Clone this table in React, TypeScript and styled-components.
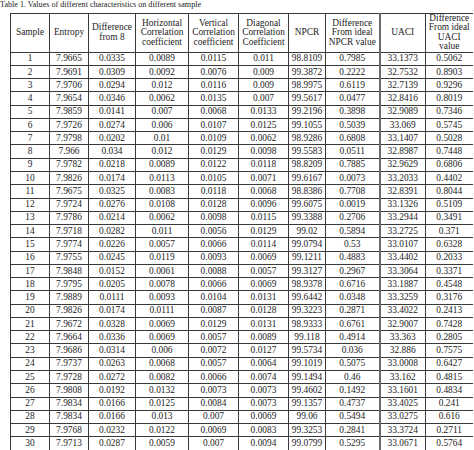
import React from 'react';
import styled, { createGlobalStyle } from 'styled-components';

const GlobalStyle = createGlobalStyle`
  html, body {
    margin: 0;
    padding: 0;
    background: #ffffff;
  }
  body {
    font-family: "Liberation Serif", "Times New Roman", serif;
    color: #1c1c1c;
  }
`;

type Row = [number, string, string, string, string, string, string, string, string, string];

const rows: Row[] = [
  [1, '7.9665', '0.0335', '0.0089', '0.0115', '0.011', '98.8109', '0.7985', '33.1373', '0.5062'],
  [2, '7.9691', '0.0309', '0.0092', '0.0076', '0.009', '99.3872', '0.2222', '32.7532', '0.8903'],
  [3, '7.9706', '0.0294', '0.012', '0.0116', '0.009', '98.9975', '0.6119', '32.7139', '0.9296'],
  [4, '7.9654', '0.0346', '0.0062', '0.0135', '0.007', '99.5617', '0.0477', '32.8416', '0.8019'],
  [5, '7.9859', '0.0141', '0.007', '0.0068', '0.0133', '99.2196', '0.3898', '32.9089', '0.7346'],
  [6, '7.9726', '0.0274', '0.006', '0.0107', '0.0125', '99.1055', '0.5039', '33.069', '0.5745'],
  [7, '7.9798', '0.0202', '0.01', '0.0109', '0.0062', '98.9286', '0.6808', '33.1407', '0.5028'],
  [8, '7.966', '0.034', '0.012', '0.0129', '0.0098', '99.5583', '0.0511', '32.8987', '0.7448'],
  [9, '7.9782', '0.0218', '0.0089', '0.0122', '0.0118', '98.8209', '0.7885', '32.9629', '0.6806'],
  [10, '7.9826', '0.0174', '0.0113', '0.0105', '0.0071', '99.6167', '0.0073', '33.2033', '0.4402'],
  [11, '7.9675', '0.0325', '0.0083', '0.0118', '0.0068', '98.8386', '0.7708', '32.8391', '0.8044'],
  [12, '7.9724', '0.0276', '0.0108', '0.0128', '0.0096', '99.6075', '0.0019', '33.1326', '0.5109'],
  [13, '7.9786', '0.0214', '0.0062', '0.0098', '0.0115', '99.3388', '0.2706', '33.2944', '0.3491'],
  [14, '7.9718', '0.0282', '0.011', '0.0056', '0.0129', '99.02', '0.5894', '33.2725', '0.371'],
  [15, '7.9774', '0.0226', '0.0057', '0.0066', '0.0114', '99.0794', '0.53', '33.0107', '0.6328'],
  [16, '7.9755', '0.0245', '0.0119', '0.0093', '0.0069', '99.1211', '0.4883', '33.4402', '0.2033'],
  [17, '7.9848', '0.0152', '0.0061', '0.0088', '0.0057', '99.3127', '0.2967', '33.3064', '0.3371'],
  [18, '7.9795', '0.0205', '0.0078', '0.0066', '0.0069', '98.9378', '0.6716', '33.1887', '0.4548'],
  [19, '7.9889', '0.0111', '0.0093', '0.0104', '0.0131', '99.6442', '0.0348', '33.3259', '0.3176'],
  [20, '7.9826', '0.0174', '0.0111', '0.0087', '0.0128', '99.3223', '0.2871', '33.4022', '0.2413'],
  [21, '7.9672', '0.0328', '0.0069', '0.0129', '0.0131', '98.9333', '0.6761', '32.9007', '0.7428'],
  [22, '7.9664', '0.0336', '0.0069', '0.0057', '0.0089', '99.118', '0.4914', '33.363', '0.2805'],
  [23, '7.9686', '0.0314', '0.006', '0.0072', '0.0127', '99.5734', '0.036', '32.886', '0.7575'],
  [24, '7.9737', '0.0263', '0.0068', '0.0057', '0.0064', '99.1019', '0.5075', '33.0008', '0.6427'],
  [25, '7.9728', '0.0272', '0.0082', '0.0066', '0.0074', '99.1494', '0.46', '33.162', '0.4815'],
  [26, '7.9808', '0.0192', '0.0132', '0.0073', '0.0073', '99.4602', '0.1492', '33.1601', '0.4834'],
  [27, '7.9834', '0.0166', '0.0125', '0.0084', '0.0073', '99.1357', '0.4737', '33.4025', '0.241'],
  [28, '7.9834', '0.0166', '0.013', '0.007', '0.0069', '99.06', '0.5494', '33.0275', '0.616'],
  [29, '7.9768', '0.0232', '0.0122', '0.0069', '0.0083', '99.3253', '0.2841', '33.3724', '0.2711'],
  [30, '7.9713', '0.0287', '0.0059', '0.007', '0.0094', '99.0799', '0.5295', '33.0671', '0.5764'],
];

const headers: string[][] = [
  ['Sample'],
  ['Entropy'],
  ['Difference', 'from 8'],
  ['Horizontal', 'Correlation', 'coefficient'],
  ['Vertical', 'Correlation', 'coefficient'],
  ['Diagonal', 'Correlation', 'Coefficient'],
  ['NPCR'],
  ['Difference', 'From ideal', 'NPCR value'],
  ['UACI'],
  ['Difference', 'From ideal', 'UACI', 'value'],
];

// column widths in px, measured off the reference
const widths = [39, 39, 47, 53, 50, 50, 37, 54, 46, 47];

export default function App() {
  return (
    <>
      <GlobalStyle />
      <Page>
        <Title>Table 1. Values of different characteristics on different sample</Title>
        <Table>
          <colgroup>
            {widths.map((w, i) => (
              <col key={i} style={{ width: w }} />
            ))}
          </colgroup>
          <thead>
            <tr>
              {headers.map((lines, i) => (
                <HeadCell key={i} $double={i === 8} $last={i === 9}>
                  {lines.map((line, j) => (
                    <HeadLine key={j}>{line}</HeadLine>
                  ))}
                </HeadCell>
              ))}
            </tr>
          </thead>
          <tbody>
            {rows.map((row) => (
              <BodyRow key={row[0]}>
                {row.map((value, i) => (
                  <Cell key={i} $double={i === 8} $last={i === 9}>
                    {value}
                  </Cell>
                ))}
              </BodyRow>
            ))}
          </tbody>
        </Table>
      </Page>
    </>
  );
}

const Page = styled.div`
  width: 474px;
  height: 450px;
  overflow: hidden;
  background: #ffffff;
`;

const Title = styled.div`
  height: 13px;
  font-size: 8.1px;
  line-height: 9px;
  color: #222222;
  white-space: nowrap;
`;

const Table = styled.table`
  margin-left: 10px;
  width: 462px;
  table-layout: fixed;
  border-collapse: collapse;
  font-size: 9.4px;
`;

const HeadCell = styled.th<{ $double?: boolean; $last?: boolean }>`
  height: 36px;
  padding: 0;
  font-weight: 400;
  text-align: center;
  vertical-align: middle;
  line-height: 9.4px;
  border: 1px solid #3a3a3a;
  ${({ $double }) => $double && 'border-left: 2px double #6a6a6a;'}
  ${({ $last }) => $last && 'border-right: none;'}
`;

const HeadLine = styled.div`
  white-space: nowrap;
`;

const BodyRow = styled.tr`
  height: 13.28px;
`;

const Cell = styled.td<{ $double?: boolean; $last?: boolean }>`
  padding: 0;
  text-align: center;
  vertical-align: middle;
  line-height: 11px;
  white-space: nowrap;
  border: 1px solid #3a3a3a;
  ${({ $double }) => $double && 'border-left: 2px double #6a6a6a;'}
  ${({ $last }) => $last && 'border-right: none;'}
`;
